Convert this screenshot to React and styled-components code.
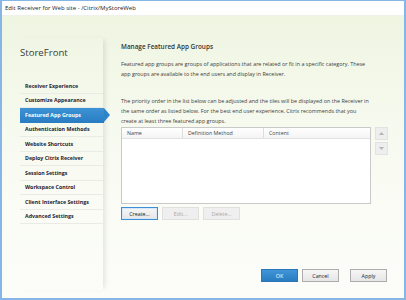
import React from "react";
import styled, { createGlobalStyle, css } from "styled-components";

const GlobalStyle = createGlobalStyle`
  html, body { margin: 0; padding: 0; }
  body { width: 406px; height: 300px; overflow: hidden; font-family: "Open Sans", "Noto Sans", sans-serif; }
  * { box-sizing: border-box; }
`;

const Window = styled.div`
  width: 406px;
  height: 300px;
  border: 1px solid #86b6e6;
  border-width: 1px 2px 2px 2px;
  display: flex;
  flex-direction: column;
  background: #fff;
`;

const TitleBar = styled.div`
  height: 15px;
  flex: none;
  display: flex;
  align-items: center;
  padding-left: 3px;
  font-size: 6px;
  color: #222;
  background: #fff;
  border-bottom: 1px solid #eef2ea;
`;

const Body = styled.div`
  flex: 1;
  display: flex;
  background: linear-gradient(180deg, #eef5e1 0%, #f4f8ea 25%, #f9fbf3 55%, #fcfdf9 100%);
`;

const Sidebar = styled.div`
  width: 86px;
  margin-left: 16px;
  margin-top: 22px;
  margin-bottom: 8px;
  display: flex;
  flex-direction: column;
  position: relative;
  box-shadow: 4px 0 5px -2px rgba(0, 0, 0, 0.1);
`;

const Brand = styled.div`
  font-size: 9.6px;
  color: #3a3a3a;
  padding-left: 2px;
  height: 26px;
  display: flex;
  align-items: center;
  margin-top: 1px;
  margin-bottom: 14px;
`;

const NavList = styled.div`
  display: flex;
  flex-direction: column;
  margin-left: 2px;
`;

const NavItem = styled.div`
  position: relative;
  height: 14.5px;
  display: flex;
  align-items: center;
  padding-left: 5px;
  font-size: 5.3px;
  font-weight: 700;
  color: #1f2430;
  border-bottom: 1px solid #e8ebe6;
  white-space: nowrap;
  ${(p) =>
    p.$active &&
    css`
      color: #fff;
      background: linear-gradient(180deg, #3d93d6 0%, #2a7dc2 100%);
      border-bottom-color: #2a7dc2;
      margin-right: -1px;
      &::after {
        content: "";
        position: absolute;
        right: -6px;
        top: 0;
        border-top: 7.25px solid transparent;
        border-bottom: 7.25px solid transparent;
        border-left: 6px solid #2f84c8;
      }
    `}
`;

const Main = styled.div`
  flex: 1;
  display: flex;
  flex-direction: column;
  padding: 24px 16px 16px 18px;
`;

const Heading = styled.div`
  font-size: 6.4px;
  font-weight: 600;
  color: #333;
  height: 13px;
  display: flex;
  align-items: center;
`;

const Para = styled.p`
  margin: ${(p) => (p.$first ? "6px" : "17px")} 0 0;
  font-size: 5.4px;
  line-height: 10px;
  color: #3c3c3c;
  width: 252px;
`;

const TableRow = styled.div`
  display: flex;
  gap: 4px;
  margin-top: 1px;
`;

const Table = styled.div`
  width: 250px;
  height: 77px;
  border: 1px solid #c9c9c9;
  background: #fff;
`;

const HeaderRow = styled.div`
  display: grid;
  grid-template-columns: 61px 81px 1fr;
  height: 11px;
  background: linear-gradient(180deg, #fff, #f4f4f4);
  border-bottom: 1px solid #e2e2e2;
`;

const HeaderCell = styled.div`
  font-size: 5.3px;
  color: #444;
  display: flex;
  align-items: center;
  padding-left: 5px;
  border-right: 1px solid #dedede;
  &:last-child { border-right: none; }
`;

const ArrowCol = styled.div`
  display: flex;
  flex-direction: column;
  gap: 2px;
`;

const ArrowBtn = styled.div`
  width: 13px;
  height: 13px;
  background: #eeeeee;
  border: 1px solid #e2e2e2;
  display: flex;
  align-items: center;
  justify-content: center;
`;

const ActionRow = styled.div`
  display: flex;
  gap: 4px;
  margin-top: 3px;
`;

const Button = styled.div`
  width: 37px;
  height: 13px;
  display: flex;
  align-items: center;
  justify-content: center;
  font-size: 5.3px;
  color: #222;
  background: linear-gradient(180deg, #f6f6f6, #e6e6e6);
  border: 1px solid #adadad;
  ${(p) =>
    p.$focus &&
    css`
      border-color: #3c8fd4;
      box-shadow: inset 0 0 0 1px #d6e8f8;
    `}
  ${(p) =>
    p.$disabled &&
    css`
      color: #a8a8a8;
      background: #efefef;
      border-color: #e0e0e0;
    `}
  ${(p) =>
    p.$primary &&
    css`
      color: #fff;
      background: linear-gradient(180deg, #3f95d8, #2a7cc1);
      border-color: #2a76b8;
    `}
`;

const Footer = styled.div`
  margin-top: auto;
  display: flex;
  justify-content: flex-end;
  gap: 4px;
  padding-right: 1px;
  & > :last-child { margin-left: 7px; }
`;

const Chevron = ({ up }) => (
  <svg width="5" height="3" viewBox="0 0 5 3">
    <path d={up ? "M0 3 L2.5 0 L5 3 Z" : "M0 0 L2.5 3 L5 0 Z"} fill="#b5b5b5" />
  </svg>
);

const navItems = [
  "Receiver Experience",
  "Customize Appearance",
  "Featured App Groups",
  "Authentication Methods",
  "Website Shortcuts",
  "Deploy Citrix Receiver",
  "Session Settings",
  "Workspace Control",
  "Client Interface Settings",
  "Advanced Settings",
];

export default function App() {
  return (
    <>
      <GlobalStyle />
      <Window>
        <TitleBar>Edit Receiver for Web site - /Citrix/MyStoreWeb</TitleBar>
        <Body>
          <Sidebar>
            <Brand>StoreFront</Brand>
            <NavList>
              {navItems.map((n) => (
                <NavItem key={n} $active={n === "Featured App Groups"}>
                  {n}
                </NavItem>
              ))}
            </NavList>
          </Sidebar>
          <Main>
            <Heading>Manage Featured App Groups</Heading>
            <Para $first>
              Featured app groups are groups of applications that are related or fit in a specific category. These
              app groups are available to the end users and display in Receiver.
            </Para>
            <Para>
              The priority order in the list below can be adjusted and the tiles will be displayed on the Receiver in
              the same order as listed below. For the best end user experience, Citrix recommends that you
              create at least three featured app groups.
            </Para>
            <TableRow>
              <Table>
                <HeaderRow>
                  <HeaderCell>Name</HeaderCell>
                  <HeaderCell>Definition Method</HeaderCell>
                  <HeaderCell>Content</HeaderCell>
                </HeaderRow>
              </Table>
              <ArrowCol>
                <ArrowBtn><Chevron up /></ArrowBtn>
                <ArrowBtn><Chevron /></ArrowBtn>
              </ArrowCol>
            </TableRow>
            <ActionRow>
              <Button $focus>Create...</Button>
              <Button $disabled>Edit...</Button>
              <Button $disabled>Delete...</Button>
            </ActionRow>
            <Footer>
              <Button $primary>OK</Button>
              <Button>Cancel</Button>
              <Button>Apply</Button>
            </Footer>
          </Main>
        </Body>
      </Window>
    </>
  );
}
